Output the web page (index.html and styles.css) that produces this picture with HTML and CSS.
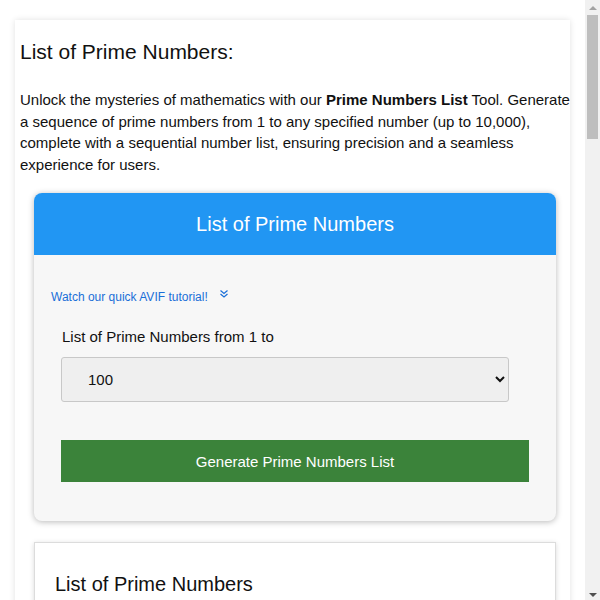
FILE: index.html
```html
<!DOCTYPE html>
<html>
<head>
<meta charset="utf-8">
<link rel="stylesheet" href="styles.css">
</head>
<body>
<div class="page">
  <div class="article">
    <h2 class="title">List of Prime Numbers:</h2>
    <p class="intro">Unlock the mysteries of mathematics with our <b>Prime Numbers List</b> Tool. Generate a sequence of prime numbers from 1 to any specified number (up to 10,000), complete with a sequential number list, ensuring precision and a seamless experience for users.</p>
    <div class="tool">
      <div class="tool-head">List of Prime Numbers</div>
      <div class="tool-body">
        <a class="tutorial" href="#">Watch our quick AVIF tutorial!
          <svg class="chev" width="10" height="10" viewBox="0 0 10 10"><polyline points="1.5,1.5 5,4.5 8.5,1.5" fill="none" stroke="#1a6fd8" stroke-width="1.2"/><polyline points="1.5,5 5,8 8.5,5" fill="none" stroke="#1a6fd8" stroke-width="1.2"/></svg>
        </a>
        <div class="form">
          <label class="label">List of Prime Numbers from 1 to</label>
          <select class="select"><option>100</option><option>500</option><option>1000</option></select>
          <button class="btn">Generate Prime Numbers List</button>
        </div>
      </div>
    </div>
    <div class="result">
      <h3 class="result-title">List of Prime Numbers</h3>
      <p class="result-text">2, 3, 5, 7, 11, 13, 17, 19, 23, 29, 31, 37, 41, 43, 47, 53, 59, 61, 67, 71, 73, 79, 83, 89, 97</p>
    </div>
  </div>
</div>
<div class="scrollbar">
  <div class="sb-btn"><span class="arrow-up"></span></div>
  <div class="sb-track"><div class="sb-thumb"></div></div>
  <div class="sb-btn"><span class="arrow-down"></span></div>
</div>
</body>
</html>
```
FILE: styles.css
```css
html, body {
  margin: 0;
  padding: 0;
  background: #ffffff;
}
html::-webkit-scrollbar {
  display: none;
}
body {
  font-family: "Liberation Sans", Arial, sans-serif;
  color: #111;
}
.page {
  padding: 20px 30px 40px 15px;
}
.scrollbar {
  position: fixed;
  top: 0;
  right: 0;
  width: 15px;
  height: 100vh;
  background: #f1f1f1;
  display: flex;
  flex-direction: column;
}
.sb-btn {
  height: 15px;
  display: flex;
  align-items: center;
  justify-content: center;
}
.arrow-up {
  width: 0;
  height: 0;
  border-left: 4px solid transparent;
  border-right: 4px solid transparent;
  border-bottom: 4px solid #a3a3a3;
  margin-left: 1px;
}
.arrow-down {
  width: 0;
  height: 0;
  border-left: 4px solid transparent;
  border-right: 4px solid transparent;
  border-top: 4px solid #505050;
  margin-top: 4px;
}
.sb-track {
  flex: 1;
  padding: 0 2px;
}
.sb-thumb {
  height: 124px;
  background: #bebebe;
}
.article {
  background: #fff;
  box-shadow: 0 0 6px rgba(0,0,0,0.12);
  padding: 1px 0 30px 5px;
}
.title {
  font-size: 21px;
  font-weight: normal;
  margin: 19px 0 0 0;
  line-height: 24px;
}
.intro {
  font-size: 15px;
  line-height: 21.5px;
  margin: 25px -4px 18px 0;
}
.tool {
  margin: 0 14px 0 14px;
  border-radius: 8px;
  background: #f7f7f7;
  box-shadow: 0 1px 6px rgba(0,0,0,0.28);
  overflow: hidden;
}
.tool-head {
  background: #2196f3;
  color: #fff;
  font-size: 20px;
  height: 62px;
  line-height: 62px;
  text-align: center;
}
.tool-body {
  padding: 34px 27px 39px 17px;
}
.tutorial {
  display: flex;
  align-items: center;
  gap: 11px;
  color: #1a6fd8;
  font-size: 12px;
  text-decoration: none;
  line-height: 16px;
}
.chev {
  margin-top: -7px;
}
.form {
  padding-left: 10px;
  margin-top: 23px;
  display: flex;
  flex-direction: column;
}
.label {
  font-size: 15px;
  line-height: 18px;
  margin-left: 1px;
}
.select {
  margin-top: 11px;
  width: calc(100% - 20px);
  height: 45px;
  background: #efefef;
  border: 1px solid #c8c8c8;
  border-radius: 3px;
  font-family: "Liberation Sans", Arial, sans-serif;
  font-size: 15px;
  color: #111;
  padding: 0 0 0 22px;
}
.btn {
  margin-top: 38px;
  height: 42px;
  width: 100%;
  background: #3b833a;
  color: #fff;
  border: none;
  font-family: "Liberation Sans", Arial, sans-serif;
  font-size: 15px;
}
.result {
  margin: 21px 14px 0 14px;
  background: #fff;
  border: 1px solid #dcdcdc;
  box-shadow: 0 1px 5px rgba(0,0,0,0.15);
  padding: 1px 20px 20px 20px;
  min-height: 2000px;
}
.result-title {
  font-size: 20px;
  font-weight: normal;
  margin: 29px 0 0 0;
}
.result-text {
  font-size: 15px;
  line-height: 22px;
}
```
